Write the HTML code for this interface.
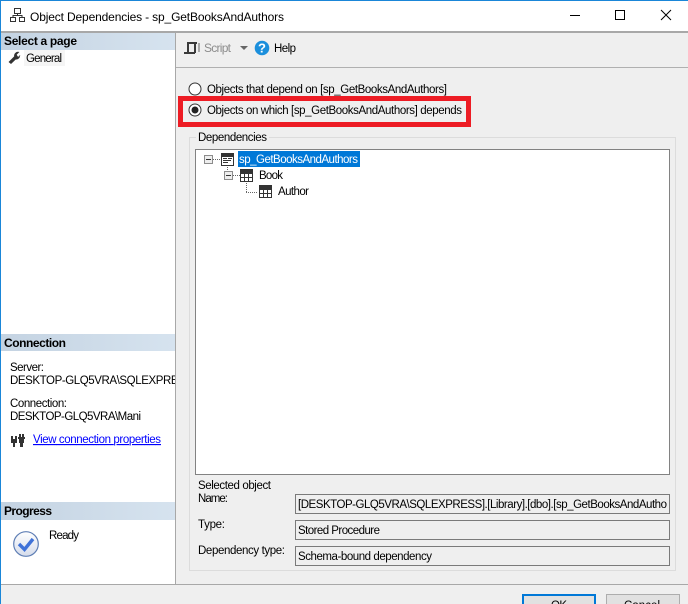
<!DOCTYPE html>
<html><head><meta charset="utf-8"><title>Object Dependencies</title>
<style>
html,body{margin:0;padding:0;background:#fff;width:688px;height:604px;overflow:hidden}
svg{display:block}
text{font-family:"Liberation Sans",sans-serif;font-size:11.5px;fill:#000}
.b{font-weight:bold;font-size:12px}
</style></head><body>
<svg width="688" height="604" viewBox="0 0 688 604" xmlns="http://www.w3.org/2000/svg" shape-rendering="crispEdges">
<defs><linearGradient id="g" x1="0" x2="1" y1="0" y2="0"><stop offset="0" stop-color="#c4d3e2"/><stop offset="1" stop-color="#d6e3ef"/></linearGradient>
<linearGradient id="chk" x1="0" y1="0" x2="0" y2="1"><stop offset="0" stop-color="#ffffff"/><stop offset="1" stop-color="#d5dceb"/></linearGradient></defs>

<!-- window -->
<rect width="688" height="604" fill="#fff"/>
<text x="30" y="21" textLength="254" style="font-size:12px">Object Dependencies - sp_GetBooksAndAuthors</text>

<!-- left panel -->
<rect x="1" y="32" width="174" height="552" fill="#fff"/>
<rect x="1" y="33" width="174" height="17" fill="url(#g)"/>
<rect x="24" y="50" width="41" height="16" fill="#f5f5f5"/>
<text class="b" x="4" y="45" textLength="73">Select a page</text>
<text x="26" y="62" textLength="36">General</text>
<g shape-rendering="geometricPrecision"><path d="M9 62 L14.5 56.5 A3.6 3.6 0 0 1 18.8 52.2 L16.4 54.6 L17.4 56.6 L19.4 57 L19.9 55.2 A3.8 3.8 0 0 1 15.6 59.2 L11 63.6 Z" fill="#333" stroke="#333" stroke-width=".6"/></g>

<rect x="1" y="334" width="174" height="17" fill="url(#g)"/>
<text class="b" x="4" y="347" textLength="62">Connection</text>
<text x="10" y="371" textLength="34">Server:</text>
<text x="10" y="384" textLength="183">DESKTOP-GLQ5VRA\SQLEXPRESS</text>
<text x="10" y="407" textLength="57">Connection:</text>
<text x="10" y="420" textLength="131">DESKTOP-GLQ5VRA\Mani</text>
<text x="33" y="443" textLength="128" style="fill:#0000ff;text-decoration:underline">View connection properties</text>
<g fill="#333"><rect x="11" y="436" width="2" height="4"/><rect x="15" y="436" width="2" height="4"/><rect x="11" y="439" width="6" height="4"/><rect x="13" y="443" width="2" height="4"/>
<rect x="19" y="434" width="2" height="3"/><rect x="22" y="434" width="2" height="3"/><rect x="18" y="437" width="7" height="2"/><rect x="19" y="439" width="5" height="4"/><rect x="20" y="443" width="3" height="4"/></g>

<rect x="1" y="502" width="174" height="18" fill="url(#g)"/>
<text class="b" x="4" y="515" textLength="48">Progress</text>
<text x="49" y="539" textLength="30">Ready</text>
<g shape-rendering="geometricPrecision"><circle cx="26" cy="544" r="12.3" fill="url(#chk)" stroke="#5f7fb5" stroke-width="1.2"/>
<path d="M19 544 L24.5 549.5 L33 539" fill="none" stroke="#3f72d8" stroke-width="3.4"/></g>

<!-- right panel -->
<rect x="175" y="32" width="513" height="572" fill="#efefef"/>
<rect x="0" y="584" width="688" height="20" fill="#efefef"/>
<rect x="1" y="31" width="687" height="2" fill="#a8a8a8"/>
<rect x="175" y="32" width="1" height="552" fill="#a8a8a8"/>
<rect x="176" y="67" width="512" height="1" fill="#b0b0b0"/>
<rect x="1" y="584" width="687" height="1" fill="#a8a8a8"/>
<rect x="0" y="0" width="688" height="1" fill="#1a86d8"/>
<rect x="0" y="0" width="1" height="604" fill="#1a86d8"/>

<!-- title icons -->
<g fill="none" stroke="#333" stroke-width="1"><rect x="14.5" y="8.5" width="6" height="5"/><rect x="10.5" y="17.5" width="5" height="4"/><rect x="19.5" y="17.5" width="5" height="4"/><path d="M17.5 14v2M13 17v-1.500h9V17"/></g>
<rect x="570" y="15" width="10" height="1" fill="#000"/>
<rect x="615.500" y="10.500" width="9" height="9" fill="none" stroke="#000"/>
<g shape-rendering="geometricPrecision"><path d="M661 10 L671 20 M671 10 L661 20" stroke="#000" stroke-width="1"/></g>

<!-- toolbar -->
<g fill="none" stroke="#3a3a3a" stroke-width="2"><path d="M187 43h10M188 43v10M195 43v10M184 53h11"/></g><rect x="198" y="43" width="2" height="9" fill="#aaa"/>
<text x="204" y="52" textLength="27" style="fill:#8c8c8c;font-size:12px">Script</text>
<g shape-rendering="geometricPrecision"><path d="M240 46h8l-4 4z" fill="#666"/>
<circle cx="262" cy="48" r="7.300" fill="#1b8fdc"/></g>
<text x="262" y="52.500" text-anchor="middle" class="b" style="fill:#fff;font-size:13px">?</text>
<text x="274" y="52" textLength="22">Help</text>

<!-- radios -->
<g shape-rendering="geometricPrecision"><circle cx="195" cy="89" r="6" fill="#fff" stroke="#333"/>
<circle cx="195" cy="110" r="6" fill="#fff" stroke="#333"/><circle cx="195" cy="110" r="3.500" fill="#222"/></g>
<text x="207" y="93" textLength="240">Objects that depend on [sp_GetBooksAndAuthors]</text>
<text x="207" y="114" textLength="255">Objects on which [sp_GetBooksAndAuthors] depends</text>
<rect x="180.500" y="98.500" width="288" height="26" fill="none" stroke="#ed1c24" stroke-width="5"/>

<!-- group -->
<rect x="189.500" y="137.500" width="486" height="433" fill="none" stroke="#dcdcdc"/>
<rect x="196" y="130" width="73" height="14" fill="#efefef"/>
<text x="198" y="141" textLength="69">Dependencies</text>

<!-- tree -->
<rect x="195.500" y="149.500" width="474" height="325" fill="#fff" stroke="#828282"/>
<rect x="238" y="151" width="122" height="16" fill="#0078d7"/>
<text x="239" y="163" textLength="119" style="fill:#fff">sp_GetBooksAndAuthors</text>
<text x="259" y="179" textLength="24">Book</text>
<text x="278" y="195" textLength="31">Author</text>
<g fill="#fff" stroke="#8c8c8c"><rect x="204.500" y="155.500" width="8" height="8" fill="#eee"/><rect x="224.500" y="171.500" width="8" height="8" fill="#eee"/></g>
<rect x="206" y="159" width="5" height="1" fill="#333"/><rect x="226" y="175" width="5" height="1" fill="#333"/>
<g stroke="#666" stroke-dasharray="1 1" fill="none"><path d="M213 159.500h8M227.500 167v4M233 175.500h7M246.500 183v9M246 192.500h12"/></g>
<!-- sp icon -->
<rect x="221.500" y="153.500" width="12" height="12" fill="#fff" stroke="#333"/><rect x="222" y="154" width="11" height="3" fill="#333"/>
<g fill="#333"><rect x="223" y="158" width="4" height="1"/><rect x="228" y="158" width="4" height="1"/><rect x="223" y="160" width="8" height="1"/><rect x="223" y="162" width="5" height="1"/></g>
<!-- table icons -->
<g fill="#fff" stroke="#333"><rect x="240.500" y="169.500" width="12" height="12"/><rect x="259.500" y="185.500" width="12" height="12"/></g>
<g stroke="#333" fill="none"><path d="M240 173.500h13M240 177.500h13M244.500 170v11M248.500 170v11M259 189.500h13M259 193.500h13M263.500 186v11M267.500 186v11"/></g><rect x="241" y="170" width="11" height="3" fill="#333"/><rect x="260" y="186" width="11" height="3" fill="#333"/>

<!-- details -->
<text x="198" y="489" textLength="73">Selected object</text>
<text x="198" y="502" textLength="30">Name:</text>
<text x="198" y="528" textLength="27">Type:</text>
<text x="198" y="554" textLength="87">Dependency type:</text>
<g fill="#efefef" stroke="#7a7a7a"><rect x="295.500" y="494.500" width="374" height="19"/><rect x="295.500" y="520.500" width="374" height="19"/><rect x="295.500" y="546.500" width="374" height="19"/></g>
<text x="298" y="508" textLength="369">[DESKTOP-GLQ5VRA\SQLEXPRESS].[Library].[dbo].[sp_GetBooksAndAutho</text>
<text x="298" y="534" textLength="82">Stored Procedure</text>
<text x="298" y="560" textLength="134">Schema-bound dependency</text>

<!-- buttons -->
<rect x="523" y="595" width="72" height="12" fill="#e1e1e1" stroke="#0078d7" stroke-width="2"/>
<rect x="606.500" y="594.500" width="73" height="12" fill="#e1e1e1" stroke="#adadad"/>
<text x="551" y="609" textLength="16">OK</text>
<text x="624" y="609" textLength="36">Cancel</text>
</svg>
</body></html>
